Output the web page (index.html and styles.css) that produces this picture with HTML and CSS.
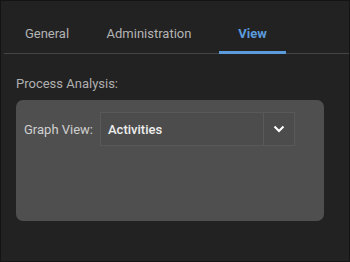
FILE: index.html
```html
<!DOCTYPE html>
<html lang="en">

<head>
    <meta charset="UTF-8">
    <meta name="viewport" content="width=device-width, initial-scale=1.0">
    <title>View Settings</title>
    <link rel="stylesheet" href="styles.css">
</head>

<body>
    <div class="window">
        <div class="tabs">
            <div class="tab tab-general">General</div>
            <div class="tab tab-admin">Administration</div>
            <div class="tab tab-view active">View</div>
        </div>

        <div class="section">
            <div class="section-title">Process Analysis:</div>

            <div class="panel">
                <div class="form-row">
                    <label for="graphView">Graph View:</label>
                    <div class="select">
                        <span class="select-value" id="graphView">Activities</span>
                        <span class="select-arrow">
                            <svg width="12" height="8" viewBox="0 0 12 8">
                                <path d="M1.5 1.5 L6 6 L10.5 1.5" fill="none" stroke="#ffffff" stroke-width="2"/>
                            </svg>
                        </span>
                    </div>
                </div>
            </div>
        </div>
    </div>
</body>

</html>
```

FILE: styles.css
```css
html,
body {
    margin: 0;
    padding: 0;
}

body {
    font-family: Roboto, 'Liberation Sans', Arial, sans-serif;
    background-color: #151515;
}

.window {
    width: 348px;
    height: 260px;
    border: 1px solid #141414;
    background-color: #222222;
    overflow: hidden;
}

.tabs {
    display: flex;
    margin: 0 0 0 3px;
    border-bottom: 1px solid #454545;
    height: 52px;
}

.tab {
    font-size: 13px;
    color: #b4b4b4;
    text-align: center;
    padding-top: 25px;
    box-sizing: border-box;
    line-height: 16px;
}

.tab-general {
    width: 86px;
}

.tab-admin {
    width: 118px;
}

.tab-view {
    width: 67px;
    margin-left: 11px;
}

.tab.active {
    color: #5b9bdc;
    font-weight: 700;
    border-bottom: 3px solid #5b9bdc;
    height: 53px;
}

.section {
    padding: 22px 0 0 15px;
}

.section-title {
    font-size: 13px;
    color: #b0b0b0;
    line-height: 16px;
    margin-bottom: 8px;
}

.panel {
    width: 308px;
    height: 121px;
    background-color: #4f4f4f;
    border-radius: 7px;
    box-sizing: border-box;
    padding: 12px 0 0 8px;
}

.form-row {
    display: flex;
    align-items: center;
}

.form-row label {
    font-size: 13px;
    color: #d0d0d0;
    width: 76px;
    padding-top: 1px;
}

.select {
    display: flex;
    width: 195px;
    height: 34px;
    border: 1px solid #595959;
    box-sizing: border-box;
    background-color: #4c4c4c;
}

.select-value {
    flex: 1;
    font-size: 13px;
    font-weight: 500;
    color: #eeeeee;
    line-height: 33px;
    padding-left: 7px;
}

.select-arrow {
    width: 30px;
    border-left: 1px solid #595959;
    display: flex;
    align-items: center;
    justify-content: center;
}
```
